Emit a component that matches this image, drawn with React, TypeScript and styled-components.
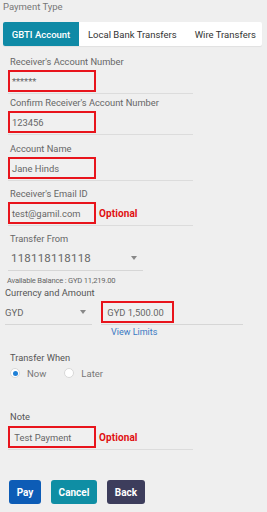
import React from "react";
import styled, { createGlobalStyle } from "styled-components";

const Global = createGlobalStyle`
  html, body { margin: 0; padding: 0; background: #efefef; }
  body { font-family: Roboto, "Liberation Sans", sans-serif; color: #555; }
  * { box-sizing: border-box; }
`;

const Page = styled.div`
  width: 267px;
  height: 512px;
  background: #efefef;
  overflow: hidden;
`;

const Title = styled.div`
  font-size: 9.5px;
  line-height: 14px;
  color: #777;
  padding-left: 3px;
`;

const Tabs = styled.div`
  display: flex;
  margin: 8px 0 0 3px;
  width: 259px;
  height: 24px;
  background: #fff;
  border-radius: 2px;
  box-shadow: 0 1px 1px rgba(0,0,0,0.06);
`;

const Tab = styled.div<{ $active?: boolean }>`
  display: flex;
  align-items: center;
  justify-content: center;
  white-space: nowrap;
  font-size: 9.5px;
  font-weight: ${(p) => (p.$active ? 500 : 400)};
  color: ${(p) => (p.$active ? "#fff" : "#333")};
  background: ${(p) => (p.$active ? "#0f8aa6" : "transparent")};
  width: ${(p) => (p.$active ? "76px" : "auto")};
  padding: ${(p) => (p.$active ? "0" : "0 9px")};
  flex: ${(p) => (p.$active ? "none" : "1 1 auto")};
  border-radius: ${(p) => (p.$active ? "2px 0 0 2px" : "0")};
`;

const FieldWrap = styled.div<{ $top: number; $w: number; $x?: number }>`
  margin-top: ${(p) => p.$top}px;
  margin-left: ${(p) => p.$x ?? 8}px;
  width: ${(p) => p.$w}px;
  border-bottom: 1px solid #dcdcdc;
  padding-bottom: 1px;
`;

const Label = styled.div<{ $x?: number }>`
  font-size: 9.3px;
  line-height: 14px;
  color: #666;
  white-space: nowrap;
  padding-left: ${(p) => p.$x ?? 2}px;
`;

const Row = styled.div`
  display: flex;
  align-items: center;
`;

const RedBox = styled.div<{ $w: number }>`
  width: ${(p) => p.$w}px;
  height: 22px;
  border: 2px solid #e8141c;
  display: flex;
  align-items: center;
  padding-left: 2px;
  font-size: 9.4px;
  color: #666;
  white-space: nowrap;
  background: #f0f0f0;
`;

const Optional = styled.span`
  font-size: 10px;
  font-weight: 700;
  color: #e01010;
  margin-left: 3px;
  letter-spacing: 0.1px;
`;

const SelectWrap = styled.div<{ $top: number; $w: number; $x: number }>`
  margin-top: ${(p) => p.$top}px;
  margin-left: ${(p) => p.$x}px;
  width: ${(p) => p.$w}px;
  border-bottom: 1px solid #d6d6d6;
`;

const SelectRow = styled.div<{ $h: number; $pl: number; $size: number }>`
  display: flex;
  align-items: center;
  justify-content: space-between;
  height: ${(p) => p.$h}px;
  padding-left: ${(p) => p.$pl}px;
  padding-right: 6px;
  font-size: ${(p) => p.$size}px;
  color: #666;
  letter-spacing: ${(p) => (p.$size > 10 ? "0.2px" : "0")};
`;

const Caret = styled.span`
  width: 0;
  height: 0;
  border-left: 3px solid transparent;
  border-right: 3px solid transparent;
  border-top: 4px solid #888;
`;

const Small = styled.div`
  font-size: 7.6px;
  line-height: 8px;
  color: #666;
  padding-left: 7px;
  margin-top: 6px;
  letter-spacing: -0.2px;
`;

const SectionLabel = styled.div<{ $top: number; $x: number }>`
  font-size: 9.3px;
  line-height: 14px;
  color: #555;
  margin-top: ${(p) => p.$top}px;
  padding-left: ${(p) => p.$x}px;
`;

const CurrencyRow = styled.div`
  display: flex;
  align-items: flex-end;
`;

const LinkText = styled.div`
  font-size: 9px;
  line-height: 12px;
  color: #3a78c2;
  padding-left: 111px;
  margin-top: 1px;
`;

const RadioGroup = styled.div`
  display: flex;
  align-items: center;
  padding-left: 10px;
  margin-top: 1px;
  height: 14px;
`;

const RadioItem = styled.label`
  display: flex;
  align-items: center;
  font-size: 9.5px;
  color: #777;
  margin-right: 18px;
`;

const RadioDot = styled.span<{ $on?: boolean }>`
  width: 10px;
  height: 10px;
  border-radius: 50%;
  background: #fff;
  border: 1px solid #d8d8d8;
  margin-right: 7px;
  display: flex;
  align-items: center;
  justify-content: center;
  &::after {
    content: "";
    display: ${(p) => (p.$on ? "block" : "none")};
    width: 5px;
    height: 5px;
    border-radius: 50%;
    background: #1e7fd6;
  }
`;

const Buttons = styled.div`
  display: flex;
  gap: 10px;
  padding-left: 9px;
  margin-top: 30px;
`;

const Btn = styled.button<{ $bg: string; $w: number }>`
  height: 24px;
  width: ${(p) => p.$w}px;
  border: none;
  border-radius: 3px;
  background: ${(p) => p.$bg};
  color: #fff;
  font-family: Roboto, "Liberation Sans", sans-serif;
  font-size: 10px;
  font-weight: 700;
  padding: 0;
`;

const Field = ({
  top,
  label,
  value,
  optional,
}: {
  top: number;
  label: string;
  value: string;
  optional?: boolean;
}) => (
  <FieldWrap $top={top} $w={185}>
    <Label>{label}</Label>
    <Row style={{ marginTop: 1 }}>
      <RedBox $w={88}>{value}</RedBox>
      {optional && <Optional>Optional</Optional>}
    </Row>
  </FieldWrap>
);

export default function App() {
  return (
    <Page>
      <Global />
      <Title>Payment Type</Title>
      <Tabs>
        <Tab $active>GBTI Account</Tab>
        <Tab>Local Bank Transfers</Tab>
        <Tab>Wire Transfers</Tab>
      </Tabs>
      <Field top={9} label="Receiver's Account Number" value="******" />
      <Field top={2} label="Confirm Receiver's Account Number" value="123456" />
      <Field top={7} label="Account Name" value="Jane Hinds" />
      <Field top={6} label="Receiver's Email ID" value="test@gamil.com" optional />

      <SelectWrap $top={6} $w={135} $x={8}>
        <Label>Transfer From</Label>
        <SelectRow $h={24} $pl={3} $size={11.5}>
          <span>118118118118</span>
          <Caret />
        </SelectRow>
      </SelectWrap>
      <Small>Available Balance : GYD 11,219.00</Small>

      <SectionLabel $top={1} $x={5}>Currency and Amount</SectionLabel>
      <CurrencyRow>
        <SelectWrap $top={0} $w={87} $x={5}>
          <SelectRow $h={24} $pl={0} $size={9.5}>
            <span>GYD</span>
            <Caret />
          </SelectRow>
        </SelectWrap>
        <SelectWrap $top={0} $w={142} $x={9}>
          <RedBox $w={73}>&nbsp;GYD 1,500.00</RedBox>
          <div style={{ height: 1 }} />
        </SelectWrap>
      </CurrencyRow>
      <LinkText>View Limits</LinkText>

      <SectionLabel $top={13} $x={10}>Transfer When</SectionLabel>
      <RadioGroup>
        <RadioItem>
          <RadioDot $on />
          Now
        </RadioItem>
        <RadioItem>
          <RadioDot />
          Later
        </RadioItem>
      </RadioGroup>

      <SectionLabel $top={30} $x={10}>Note</SectionLabel>
      <FieldWrap $top={2} $w={185}>
        <Row>
          <RedBox $w={88}>&nbsp;Test Payment</RedBox>
          <Optional>Optional</Optional>
        </Row>
      </FieldWrap>

      <Buttons>
        <Btn $bg="#0d5cb6" $w={32}>Pay</Btn>
        <Btn $bg="#0f8ea4" $w={46}>Cancel</Btn>
        <Btn $bg="#3d3d5c" $w={38}>Back</Btn>
      </Buttons>
    </Page>
  );
}
